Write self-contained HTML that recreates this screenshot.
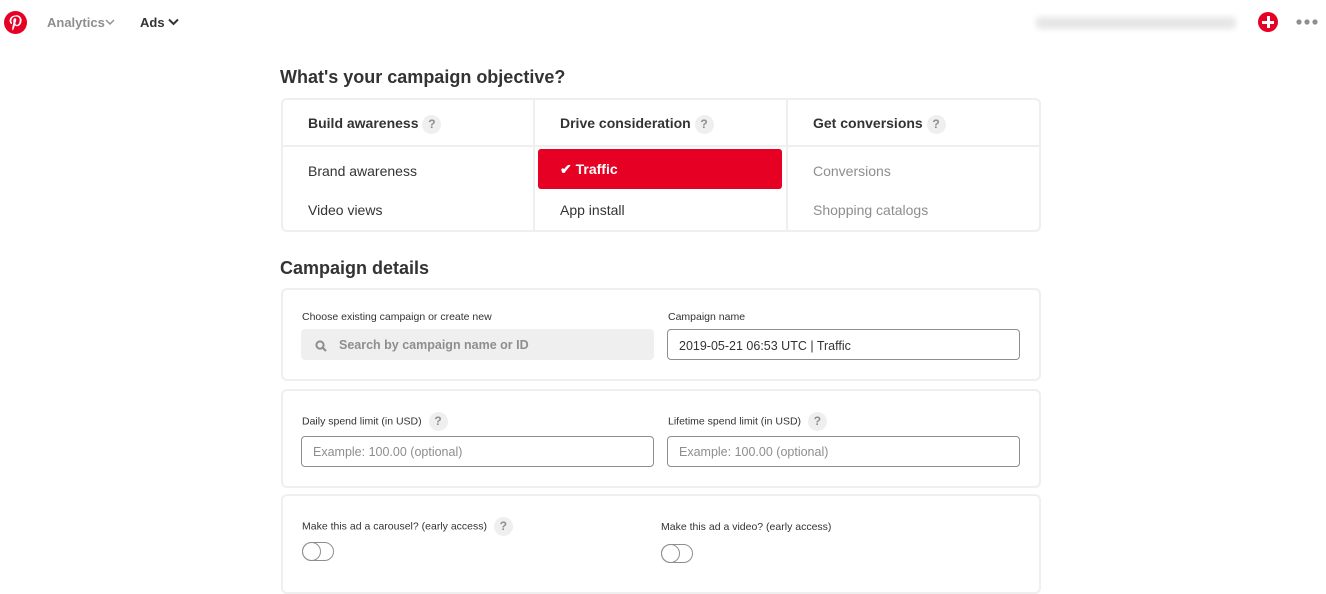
<!DOCTYPE html>
<html><head><style>
*{box-sizing:border-box;margin:0;padding:0}
body{width:1326px;height:575px;overflow:hidden;background:#fff;font-family:"Liberation Sans",sans-serif;color:#333;position:relative}
.a{position:absolute}
.card{position:absolute;left:281px;width:760px;border:2px solid #efefef;border-radius:6px;background:#fff}
.q{display:inline-block;width:19px;height:19px;border-radius:50%;background:#efefef;color:#8e8e8e;font-size:12px;font-weight:bold;text-align:center;line-height:19px;vertical-align:middle}
.h{font-size:14px;font-weight:bold;color:#333}
.t{font-size:14px;color:#333}
.g{color:#8e8e8e}
.lbl{font-size:10.5px;color:#333}
.inp{position:absolute;height:31px;width:353px;border:1px solid #8e8e8e;border-radius:4px;font-size:12.5px;padding:0 11px;line-height:29px}
.tog{position:absolute;width:32px;height:19px;border:1px solid #8e8e8e;border-radius:10px}
.tog:after{content:"";position:absolute;left:-1px;top:-1px;width:19px;height:19px;border:1px solid #8e8e8e;border-radius:50%;box-sizing:border-box}
</style></head><body>
<svg class="a" style="left:4px;top:11px" width="23" height="23" viewBox="0 0 24 24"><circle cx="12" cy="12" r="12" fill="#e60023"/><path d="M12.3 4.5c-4.300 0-6.5 3-6.5 5.6 0 1.6.6 3 1.9 3.5.2.1.4 0 .5-.2l.2-.8c.1-.2 0-.3-.1-.5-.4-.5-.6-1.1-.6-1.900 0-2.4 1.800-4.5 4.700-4.5 2.600 0 4 1.600 4 3.700 0 2.800-1.200 5.100-3 5.100-1 0-1.800-.8-1.500-1.900.3-1.200.9-2.600.9-3.500 0-.8-.4-1.500-1.300-1.500-1 0-1.900 1.100-1.900 2.500 0 .9.3 1.500.3 1.500l-1.200 5.200c-.3 1.400 0 3.300.1 3.500h.2c.2-.2 1.300-1.600 1.700-3l.6-2.500c.3.6 1.200 1.100 2.200 1.100 2.900 0 4.900-2.700 4.900-6.300 0-2.700-2.300-5.300-5.800-5.300z" fill="#fff"/></svg>
<div class="a" style="left:47px;top:15px;font-size:13px;font-weight:bold;color:#8e8e8e">Analytics</div>
<svg class="a" style="left:105px;top:19px" width="10" height="7" viewBox="0 0 10 7"><path d="M1 1l4 4 4-4" fill="none" stroke="#8e8e8e" stroke-width="1.4"/></svg>
<div class="a" style="left:140px;top:15px;font-size:13px;font-weight:bold;color:#333">Ads</div>
<svg class="a" style="left:168px;top:18px" width="11" height="8" viewBox="0 0 11 8"><path d="M1 1.5l4.5 4.5 4.5-4.5" fill="none" stroke="#333" stroke-width="2"/></svg>
<div class="a" style="left:1036px;top:17px;width:200px;height:12px;background:#e6e6e6;filter:blur(3px);border-radius:4px"></div>
<div class="a" style="left:1258px;top:12px;width:20px;height:20px;border-radius:50%;background:#e60023"></div>
<div class="a" style="left:1262px;top:21px;width:12px;height:3px;background:#fff"></div>
<div class="a" style="left:1266.5px;top:16px;width:3px;height:12px;background:#fff"></div>
<svg class="a" style="left:1296px;top:18px" width="22" height="8" viewBox="0 0 22 8"><circle cx="3" cy="4" r="2.6" fill="#8e8e8e"/><circle cx="11" cy="4" r="2.6" fill="#8e8e8e"/><circle cx="19" cy="4" r="2.6" fill="#8e8e8e"/></svg>

<div class="a" style="left:280px;top:67px;font-size:18px;font-weight:bold;color:#333">What's your campaign objective?</div>
<div class="card" style="top:98px;height:134px">
 <div class="a" style="left:250px;top:0;width:2px;height:130px;background:#efefef"></div>
 <div class="a" style="left:503px;top:0;width:2px;height:130px;background:#efefef"></div>
 <div class="a" style="left:0;top:45px;width:756px;height:2px;background:#efefef"></div>
 <div class="a h" style="left:25px;top:15px">Build awareness <span class="q">?</span></div>
 <div class="a h" style="left:277px;top:15px">Drive consideration <span class="q">?</span></div>
 <div class="a h" style="left:530px;top:15px">Get conversions <span class="q">?</span></div>
 <div class="a t" style="left:25px;top:63px">Brand awareness</div>
 <div class="a t" style="left:25px;top:102px">Video views</div>
 <div class="a" style="left:255px;top:49px;width:244px;height:40px;background:#e60023;border-radius:3px;color:#fff;font-weight:bold;font-size:14px;line-height:40px;padding-left:22px">✔ Traffic</div>
 <div class="a t" style="left:277px;top:102px">App install</div>
 <div class="a t g" style="left:530px;top:63px">Conversions</div>
 <div class="a t g" style="left:530px;top:102px">Shopping catalogs</div>
</div>

<div class="a" style="left:280px;top:258px;font-size:18px;font-weight:bold;color:#333">Campaign details</div>
<div class="card" style="top:288px;height:93px">
 <div class="a lbl" style="left:19px;top:21px">Choose existing campaign or create new</div>
 <div class="a lbl" style="left:385px;top:21px">Campaign name</div>
 <div class="inp" style="left:18px;top:39px;background:#efefef;border:none;color:#8e8e8e;font-weight:bold;padding-left:38px;line-height:33px">Search by campaign name or ID</div>
 <svg class="a" style="left:32px;top:50px" width="12" height="12" viewBox="0 0 12 12"><circle cx="5" cy="5" r="3.6" fill="none" stroke="#8e8e8e" stroke-width="2"/><path d="M7.5 7.5L11 11" stroke="#8e8e8e" stroke-width="2.2"/></svg>
 <div class="inp" style="left:384px;top:39px;color:#333;line-height:32px">2019-05-21 06:53 UTC | Traffic</div>
</div>
<div class="card" style="top:389px;height:99px">
 <div class="a lbl" style="left:19px;top:21px">Daily spend limit (in USD) <span class="q" style="margin-left:4px">?</span></div>
 <div class="a lbl" style="left:385px;top:21px">Lifetime spend limit (in USD) <span class="q" style="margin-left:4px">?</span></div>
 <div class="inp" style="left:18px;top:45px;color:#8e8e8e;line-height:31px">Example: 100.00 (optional)</div>
 <div class="inp" style="left:384px;top:45px;color:#8e8e8e;line-height:31px">Example: 100.00 (optional)</div>
</div>
<div class="card" style="top:494px;height:100px">
 <div class="a lbl" style="left:19px;top:21px">Make this ad a carousel? (early access) <span class="q" style="margin-left:4px">?</span></div>
 <div class="a lbl" style="left:378px;top:25px">Make this ad a video? (early access)</div>
 <div class="tog" style="left:19px;top:46px"></div>
 <div class="tog" style="left:378px;top:48px"></div>
</div>
</body></html>
